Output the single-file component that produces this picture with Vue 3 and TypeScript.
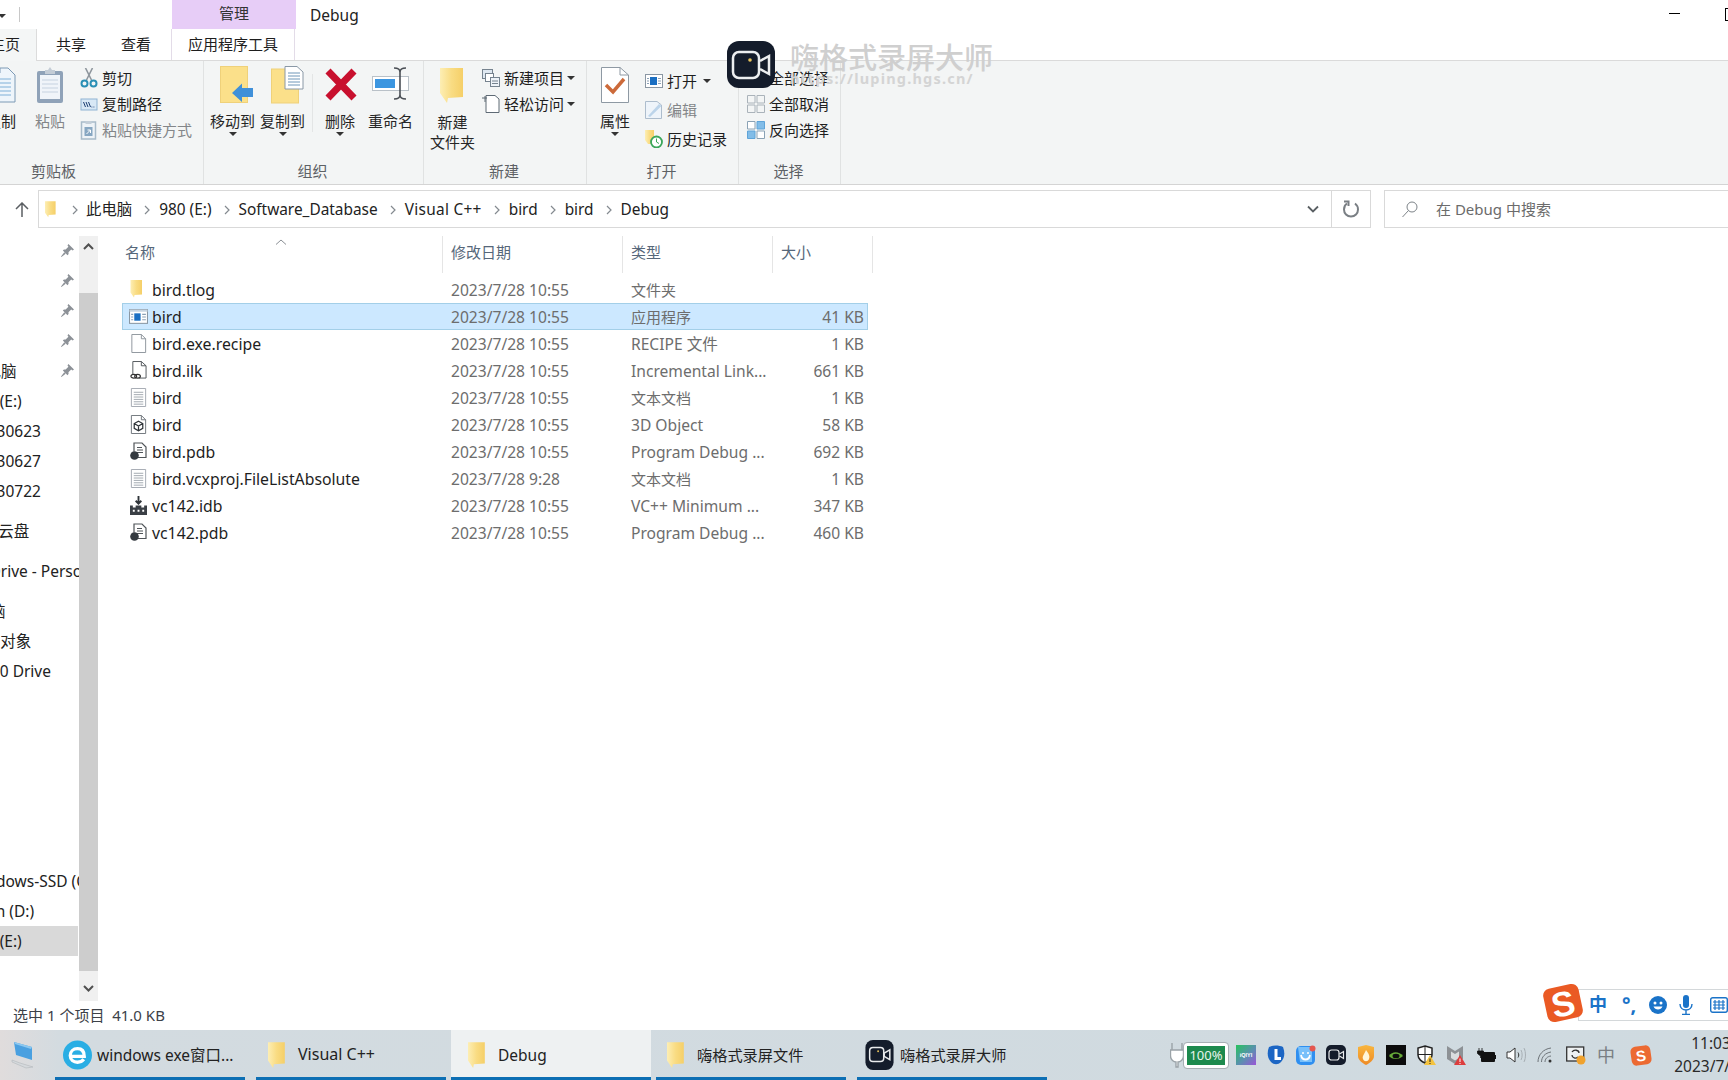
<script setup lang="ts">
interface FileRow { icon: string; name: string; date: string; type: string; size: string; cjk?: boolean; sel?: boolean }
const d = '2023/7/28 10:55'
const files: FileRow[] = [
  { icon: 'folder', name: 'bird.tlog', date: d, type: '文件夹', size: '', cjk: true },
  { icon: 'exe', name: 'bird', date: d, type: '应用程序', size: '41 KB', cjk: true, sel: true },
  { icon: 'blank', name: 'bird.exe.recipe', date: d, type: 'RECIPE 文件', size: '1 KB' },
  { icon: 'ilk', name: 'bird.ilk', date: d, type: 'Incremental Link...', size: '661 KB' },
  { icon: 'txt', name: 'bird', date: d, type: '文本文档', size: '1 KB', cjk: true },
  { icon: 'obj', name: 'bird', date: d, type: '3D Object', size: '58 KB' },
  { icon: 'pdb', name: 'bird.pdb', date: d, type: 'Program Debug ...', size: '692 KB' },
  { icon: 'txt', name: 'bird.vcxproj.FileListAbsolute', date: '2023/7/28 9:28', type: '文本文档', size: '1 KB', cjk: true },
  { icon: 'idb', name: 'vc142.idb', date: d, type: 'VC++ Minimum ...', size: '347 KB' },
  { icon: 'pdb', name: 'vc142.pdb', date: d, type: 'Program Debug ...', size: '460 KB' },
]
interface NavRow { text: string; x: number; pin?: boolean; gap?: number; sel?: boolean }
const nav: NavRow[] = [
  { text: '', x: 0, pin: true }, { text: '', x: 0, pin: true }, { text: '', x: 0, pin: true }, { text: '', x: 0, pin: true },
  { text: '此电脑', x: -30, pin: true },
  { text: '980 (E:)', x: -31 },
  { text: '20230623', x: -30 }, { text: '20230627', x: -30 }, { text: '20230722', x: -30 },
  { text: 'WPS云盘', x: -34, gap: 10 },
  { text: 'OneDrive - Personal', x: -41, gap: 10 },
  { text: '此电脑', x: -41, gap: 10 },
  { text: '3D 对象', x: -24 },
  { text: '360 Drive', x: -18 },
  { text: 'Windows-SSD (C:)', x: -32, gap: 180 },
  { text: 'Main (D:)', x: -31 },
  { text: '980 (E:)', x: -31, sel: true },
]
const crumbs = ['此电脑', '980 (E:)', 'Software_Database', 'Visual C++', 'bird', 'bird', 'Debug']
const tasks = [
  { icon: 'ie', text: 'windows exe窗口...', cls: 't1' },
  { icon: 'folder', text: 'Visual C++', cls: 't2' },
  { icon: 'folder', text: 'Debug', cls: 't3 active' },
  { icon: 'folder', text: '嗨格式录屏文件', cls: 't4' },
  { icon: 'rec', text: '嗨格式录屏大师', cls: 't5' },
]
const trayIcons = ['iq', 'lens', 'smile', 'cam', 'guard', 'nv', 'sec', 'mc', 'batt', 'vol', 'wifi', 'mon']
</script>

<template>
  <div class="root">
    <svg class="defs" aria-hidden="true">
      <defs>
        <linearGradient id="fg" x1="0" y1="0" x2="1" y2="0">
          <stop offset="0" stop-color="#fdeeb4" /><stop offset=".5" stop-color="#f9dc83" /><stop offset="1" stop-color="#f5cf68" />
        </linearGradient>
        <linearGradient id="iqg" x1="0" y1="0" x2="1" y2="1">
          <stop offset="0" stop-color="#27c35e" /><stop offset=".55" stop-color="#5b8fb0" /><stop offset="1" stop-color="#9a55d8" />
        </linearGradient>
        <linearGradient id="sh" x1="0" y1="0" x2="0" y2="1">
          <stop offset="0" stop-color="#f8b63e" /><stop offset="1" stop-color="#ee8a24" />
        </linearGradient>
      </defs>
      <symbol id="i-folder" viewBox="0 0 26 36"><path d="M0 0H23V29L8 30 7 35 0 25Z" fill="url(#fg)" /></symbol>
      <symbol id="i-exe" viewBox="0 0 18 14"><rect x=".5" y=".5" width="17" height="13" fill="#fff" stroke="#8a97a3" /><rect x=".5" y=".5" width="17" height="2" fill="#c9d6e2" /><rect x="5" y="4" width="6" height="7" fill="#1b6fc2" /><path d="M2 5h2M2 7.500h2M2 10h2M12.500 5h3.500M12.500 7.500h3.500M12.500 10h3.500" stroke="#8aa0b5" /></symbol>
      <symbol id="i-blank" viewBox="0 0 16 20"><path d="M1 .5H11L15.500 5V19.500H1Z" fill="#fff" stroke="#8c949b" /><path d="M11 .5V5H15.500" fill="none" stroke="#8c949b" /></symbol>
      <symbol id="i-ilk" viewBox="0 0 18 20"><path d="M3 14V.500H12L17 5V18H9" fill="#fff" stroke="#4f5458" /><path d="M12 .5V5H17" fill="none" stroke="#4f5458" /><ellipse cx="4" cy="16" rx="3" ry="2" fill="none" stroke="#333" stroke-width="1.300" /><ellipse cx="8" cy="16" rx="3" ry="2" fill="none" stroke="#333" stroke-width="1.300" /></symbol>
      <symbol id="i-txt" viewBox="0 0 16 20"><path d="M.5.5H15.500V19.500H.5Z" fill="#fff" stroke="#a2a8b0" /><path d="M3 4.500H13M3 7H13M3 9.500H13M3 12H13M3 14.500H13M3 17H13" stroke="#a0a6ae" /></symbol>
      <symbol id="i-obj" viewBox="0 0 16 20"><path d="M.5.5H11L15.500 5V19.500H.5Z" fill="#fff" stroke="#6d7379" /><path d="M11 .5V5H15.500" fill="none" stroke="#6d7379" /><path d="M8 6.500L12.500 9V14L8 16.500 3.500 14V9ZM3.500 9L8 11.500 12.500 9M8 11.500V16.500" fill="none" stroke="#2e3338" stroke-width="1.300" /></symbol>
      <symbol id="i-pdb" viewBox="0 0 17 18"><path d="M4 9V.500H12L16 4.500V15H8" fill="#fff" stroke="#4f5458" stroke-width="1.200" /><path d="M7 5h5M7 7.500h6M7 10h6" stroke="#4f5458" /><circle cx="4.500" cy="13" r="4.300" fill="#343a40" /></symbol>
      <symbol id="i-idb" viewBox="0 0 18 20"><path d="M0 10H3V12H6V10H12V12H15V10H18V20H0Z" fill="#3a3f45" /><path d="M9 0V8M6 5L9 8 12 5" fill="none" stroke="#2f3439" stroke-width="2" /><path d="M3 15.500H5M8 15.500H10M13 15.500H15" stroke="#fff" stroke-width="2" /></symbol>

      <symbol id="i-plug" viewBox="0 0 14 26"><path d="M2 1V8M12 1V8M0.500 8H13.500V14C13.500 18 10 20 8 20V25H6V20C4 20 .5 18 .5 14Z" fill="#fff" stroke="#9ba3a8" stroke-width="1.400" /></symbol>
      <symbol id="i-ie" viewBox="0 0 30 30"><circle cx="15" cy="15" r="15" fill="#2aaee4" /><path d="M7.500 16.500H22C22 11 19 8.500 15 8.500 10.500 8.500 7.500 11.500 7.500 15.500 7.500 20 11 22.500 15 22.500 18 22.500 20 21.500 21.500 19.500" fill="none" stroke="#fff" stroke-width="3.400" /></symbol>
      <symbol id="i-rec" viewBox="0 0 30 32"><rect width="30" height="32" rx="8" fill="#141c2b" /><rect x="4.500" y="8" width="15" height="15" rx="3.500" fill="none" stroke="#e8eaec" stroke-width="1.600" /><path d="M20 14L26 10.500V21L20 17.500Z" fill="none" stroke="#e8eaec" stroke-width="1.600" /><circle cx="13.500" cy="12" r="1" fill="#e8c35a" /></symbol>
      <symbol id="i-iq" viewBox="0 0 20 20"><rect width="20" height="20" fill="url(#iqg)" /><text x="10" y="12" text-anchor="middle" font-size="5.500" font-family="Liberation Sans" font-weight="700" fill="#fff">iQIYI</text></symbol>
      <symbol id="i-lens" viewBox="0 0 20 20"><path d="M3 2C7 0 13 0 17 2 19 7 19 13 15 17 12 20 8 20 5 17 1 13 1 7 3 2Z" fill="#1c66c4" /><path d="M8.500 4H11.500V12H15V15H8.500Z" fill="#fff" /></symbol>
      <symbol id="i-smile" viewBox="0 0 20 20"><rect y="1" width="19" height="19" rx="5" fill="#2f8ff0" /><path d="M2 2H16V17H4Z" fill="#78c0fa" /><path d="M5 10C6 16 13 16 14 10" fill="none" stroke="#fff" stroke-width="1.800" /><circle cx="7" cy="8" r="1" fill="#fff" /><circle cx="12" cy="8" r="1" fill="#fff" /><circle cx="16.500" cy="3.500" r="3" fill="#e5574f" /></symbol>
      <symbol id="i-cam" viewBox="0 0 20 20"><rect width="20" height="20" rx="5" fill="#141c2b" /><rect x="3" y="5" width="10" height="10" rx="2.500" fill="none" stroke="#e8eaec" stroke-width="1.200" /><path d="M13.500 9L17.500 6.500V13.500L13.500 11" fill="none" stroke="#e8eaec" stroke-width="1.200" /></symbol>
      <symbol id="i-guard" viewBox="0 0 18 20"><path d="M1 2L9 0 17 2V11C17 15 13 18 9 20 5 18 1 15 1 11Z" fill="url(#sh)" /><path d="M9 5C12 9 13 11 12 14 11 17 7 17 6 14 5 11 7 10 9 5Z" fill="#fff5d8" /></symbol>
      <symbol id="i-nv" viewBox="0 0 20 20"><rect width="20" height="20" fill="#0c0c0c" /><path d="M3 11C6 6 13 6 17 11 13 15 6 15 3 11Z" fill="#66a838" /><ellipse cx="10" cy="11" rx="3.500" ry="2.300" fill="#0c0c0c" /></symbol>
      <symbol id="i-sec" viewBox="0 0 20 20"><path d="M9 1L16 3V10C16 14 12 17 9 18 6 17 2 14 2 10V3Z" fill="#fff" stroke="#222" stroke-width="1.500" /><path d="M9 1V18M2 9.500H16" stroke="#222" stroke-width="1" /><path d="M14 10L20 20H8Z" fill="#f4c33e" /><path d="M14 13.500V17M14 18V19" stroke="#222" /></symbol>
      <symbol id="i-mc" viewBox="0 0 20 20"><path d="M1 1L9 6 17 1V14L9 19 1 14Z" fill="#8d9195" /><path d="M5 6.500L9 9 13 6.500V13L9 15.500 5 13Z" fill="#d9dcde" /><path d="M14 10L20 20H8Z" fill="#dc3d3d" /><path d="M14 13.500V17M14 18V19" stroke="#fff" /></symbol>
      <symbol id="i-batt" viewBox="0 0 20 20"><path d="M3 3V6M6 3V6M1.500 6H7.500V8.500L5 10.500H4L1.500 8.500ZM4.500 10.500V13" fill="#111" stroke="#111" stroke-width=".8" /><rect x="5" y="7" width="14" height="10" rx="1" fill="#111" /><rect x="19" y="10" width="1" height="4" fill="#111" /></symbol>
      <symbol id="i-vol" viewBox="0 0 20 20"><path d="M1 7H4L9 3V17L4 13H1Z" fill="#fff" stroke="#333" /><path d="M12 7.500C13 9 13 11 12 12.500" fill="none" stroke="#333" /><path d="M15 5C16.500 8 16.500 12 15 15" fill="none" stroke="#a8b0b5" /><path d="M18 3C20 7 20 13 18 17" fill="none" stroke="#a8b0b5" /></symbol>
      <symbol id="i-wifi" viewBox="0 0 20 20"><path d="M2 17C2 10 7 4 15 3" fill="none" stroke="#6d7378" /><path d="M5.500 17C5.500 12 9 8 15 7" fill="none" stroke="#6d7378" /><path d="M9 17C9 14 11 11.500 15 11" fill="none" stroke="#6d7378" /><circle cx="14" cy="16" r="1.500" fill="#333" /></symbol>
      <symbol id="i-mon" viewBox="0 0 20 20"><rect x=".7" y="2" width="17" height="14" fill="#eef1f2" stroke="#333" stroke-width="1.300" /><path d="M6 7C8 4 13 5 13 8M12 12C10 14 6 13 6 10" fill="none" stroke="#333" stroke-width="1.300" /><circle cx="15" cy="15" r="4.500" fill="#f0a22e" /></symbol>
      <symbol id="i-pin" viewBox="0 0 14 14"><path d="M8 0L14 6 12.500 7 11 6 8 9C8.500 10.500 8 11.500 7 12L2 7C2.500 6 3.500 5.500 5 6L8 3 7 1.500ZM3.500 9L5 10.500 .5 14 0 13.500Z" fill="#8c9197" /></symbol>
    </svg>

    <header class="titlebar">
      <span class="qa-caret"></span>
      <span class="qa-sep"></span>
      <div class="ctx-tab">管理</div>
      <span class="title">Debug</span>
      <span class="win-min"></span>
      <span class="win-max"></span>
    </header>

    <nav class="tabs">
      <div class="tab home"><span class="home-text">主页</span></div>
      <div class="tab share">共享</div>
      <div class="tab view">查看</div>
      <div class="tab tool">应用程序工具</div>
    </nav>

    <section class="ribbon">
      <div class="group g1">
        <div class="group-body">
          <div class="big copy">
            <svg class="big-ic" width="32" height="36" viewBox="0 0 32 36"><path d="M5 6H16V1H24L31 8V35H5Z" fill="#eef5fb" stroke="#7d9ab5" /><path d="M10 12H27M10 16H27M10 20H27M10 24H27M10 28H27" stroke="#7fb0d8" /></svg>
            <span class="cut-label">复制</span>
          </div>
          <div class="big paste muted">
            <svg class="big-ic" width="28" height="36" viewBox="0 0 28 36"><rect x="1" y="4" width="26" height="32" rx="2" fill="#8fa2b8" /><rect x="4" y="8" width="20" height="24" fill="#f0f4f9" /><path d="M6 13H22M6 17H22M6 21H22M6 25H22" stroke="#c6d2e0" /><path d="M9 7V3H12L14 0 16 3H19V7Z" fill="#c3ccd6" /></svg>
            <span>粘贴</span>
          </div>
          <div class="small-col tight">
            <div class="small"><svg width="17" height="20" viewBox="0 0 17 20"><path d="M12 0L6 12M5 0L11 12" stroke="#8f979e" stroke-width="1.600" /><circle cx="4" cy="15.500" r="3" fill="none" stroke="#2a8fb5" stroke-width="2" /><circle cx="13" cy="15.500" r="3" fill="none" stroke="#2a8fb5" stroke-width="2" /></svg><span>剪切</span></div>
            <div class="small"><svg width="17" height="14" viewBox="0 0 17 14"><rect x=".5" y="2" width="16" height="11" fill="#d8e8f6" stroke="#8fb3d3" /><path d="M3 5L5 10M5.500 5L7.500 10M8 5L10 10M11 10H11.800M13 10H13.800" stroke="#1d3f73" stroke-width="1" /></svg><span>复制路径</span></div>
            <div class="small muted"><svg width="17" height="20" viewBox="0 0 17 20"><rect x="1" y="2" width="14" height="17" fill="#eef3f7" stroke="#a8bbc9" stroke-width="1.500" /><path d="M5 1H11V4H5Z" fill="#c3ced8" /><rect x="4" y="7" width="8" height="9" fill="#87a7c2" /><path d="M6 14L10 10M7 10H10V13" stroke="#fff" fill="none" /></svg><span>粘贴快捷方式</span></div>
          </div>
        </div>
        <div class="group-label lab1">剪贴板</div>
      </div>

      <div class="group g2">
        <div class="group-body">
          <div class="big w45">
            <svg class="big-ic shift4" width="34" height="38" viewBox="0 0 34 38"><rect x=".5" y=".5" width="27" height="36" fill="#fbe08a" stroke="#efd17a" /><path d="M12 27L22 17.500V22H33V31H22V36Z" fill="#3f90d9" /></svg>
            <span>移动到</span><i class="caret"></i>
          </div>
          <div class="big w45">
            <svg class="big-ic shift4" width="34" height="38" viewBox="0 0 34 38"><rect x="1.500" y="3" width="27" height="34" fill="#fbe08a" stroke="#efd17a" /><path d="M15 .5H27L33 6V23H15Z" fill="#fff" stroke="#8a98a6" /><path d="M18 7H30M18 10H30M18 13H30M18 16H30M18 19H30" stroke="#6f96b8" /></svg>
            <span>复制到</span><i class="caret"></i>
          </div>
          <span class="dash"></span>
          <div class="big w30">
            <svg class="big-ic shift1" width="32" height="36" viewBox="0 0 32 36"><path d="M3 4L29 31M29 4L3 31" stroke="#c8102e" stroke-width="7" /></svg>
            <span>删除</span><i class="caret"></i>
          </div>
          <div class="big w45 ml13">
            <svg class="big-ic" width="38" height="36" viewBox="0 0 38 36"><rect x=".5" y="9.500" width="36" height="14" fill="#fff" stroke="#b9c1c8" /><rect x="3" y="12" width="20" height="9" fill="#3c96e0" /><path d="M22 1C26 1 28 3 28 5V28C28 30 30 32 34 32M34 1C30 1 28 3 28 5M28 28C28 30 26 32 22 32" fill="none" stroke="#4a4f55" stroke-width="1.600" /></svg>
            <span>重命名</span>
          </div>
        </div>
        <div class="group-label">组织</div>
      </div>

      <div class="group g3">
        <div class="group-body">
          <div class="big w45 folder-big">
            <svg class="big-ic" width="26" height="36"><use href="#i-folder" /></svg>
            <span>新建</span><span>文件夹</span>
          </div>
          <div class="small-col tight ml2">
            <div class="small"><svg width="18" height="18" viewBox="0 0 18 18"><rect x=".5" y=".5" width="10" height="9" fill="#dfe8f1" stroke="#76838f" /><rect x="3.500" y="4.500" width="8" height="8" fill="#fff" stroke="#76838f" /><rect x="8.500" y="8.500" width="9" height="9" fill="#eef3f8" stroke="#76838f" /><path d="M10 12H16M10 14.500H16" stroke="#76838f" /></svg><span>新建项目</span><i class="caret inl"></i></div>
            <div class="small"><svg width="18" height="18" viewBox="0 0 18 18"><path d="M4 .5H13L17 4V17.500H4Z" fill="#fff" stroke="#5e6a75" /><path d="M0 3H5M3 1V7" stroke="#5e6a75" /></svg><span>轻松访问</span><i class="caret inl"></i></div>
          </div>
        </div>
        <div class="group-label">新建</div>
      </div>

      <div class="group g4">
        <div class="group-body">
          <div class="big w30 prop">
            <svg class="big-ic" width="28" height="36" viewBox="0 0 28 36"><path d="M.5.5H19L27.500 8V35.500H.5Z" fill="#fff" stroke="#8e99a3" /><path d="M19 .5V8H27.500" fill="none" stroke="#8e99a3" /><path d="M5 18L12 25 23 12" fill="none" stroke="#cc6a3a" stroke-width="3.500" /></svg>
            <span>属性</span><i class="caret"></i>
          </div>
          <div class="small-col loose ml15">
            <div class="small"><svg width="18" height="14" viewBox="0 0 18 14"><rect x=".5" y=".5" width="17" height="13" fill="#fff" stroke="#8a97a3" /><rect x="5" y="3" width="7" height="8" fill="#1b6fc2" /><path d="M2 4.500h2M2 7h2M2 9.500h2M13 4.500h3M13 7h3M13 9.500h3" stroke="#8aa0b5" /></svg><span>打开</span><i class="caret inl2"></i></div>
            <div class="small muted"><svg width="18" height="18" viewBox="0 0 18 18"><path d="M.5.5H12L16.500 4V17.500H.5Z" fill="#eef4fa" stroke="#adbdcd" /><path d="M3 15L14 3 16.500 5 5 16Z" fill="#bcd4ea" /></svg><span>编辑</span></div>
            <div class="small"><svg width="18" height="18" viewBox="0 0 18 18"><path d="M0 0H9V14H3L0 10Z" fill="url(#fg)" /><circle cx="11.500" cy="12" r="5.500" fill="#fff" stroke="#3aa65a" stroke-width="1.800" /><path d="M11.500 8.500V12L14 13.500" fill="none" stroke="#3aa65a" /></svg><span>历史记录</span></div>
          </div>
        </div>
        <div class="group-label">打开</div>
      </div>

      <div class="group g5">
        <div class="group-body">
          <div class="small-col tight">
            <div class="small"><svg width="18" height="18" viewBox="0 0 18 18"><path d="M.5.5H8V8H.5ZM10 .5H17.500V8H10ZM.5 10H8V17.500H.5ZM10 10H17.500V17.500H10Z" fill="#7fb5de" stroke="#7fb5de" /></svg><span>全部选择</span></div>
            <div class="small"><svg width="18" height="18" viewBox="0 0 18 18"><path d="M.5.5H8V8H.5ZM10 .5H17.500V8H10ZM.5 10H8V17.500H.5ZM10 10H17.500V17.500H10Z" fill="none" stroke="#aab3ba" /></svg><span>全部取消</span></div>
            <div class="small"><svg width="18" height="18" viewBox="0 0 18 18"><path d="M.5.5H8V8H.5ZM10 10H17.500V17.500H10Z" fill="#fff" stroke="#8aa2b5" /><path d="M10 .5H17.500V8H10ZM.5 10H8V17.500H.5Z" fill="#82bde8" stroke="#5fa4d8" /></svg><span>反向选择</span></div>
          </div>
        </div>
        <div class="group-label">选择</div>
      </div>
    </section>

    <div class="addr-row">
      <svg class="up" width="14" height="16" viewBox="0 0 14 16"><path d="M7 15V1M1 7L7 1 13 7" fill="none" stroke="#5b5f63" stroke-width="1.500" /></svg>
      <div class="addr">
        <svg class="addr-folder" width="12" height="17"><use href="#i-folder" /></svg>
        <div class="crumbs">
          <template v-for="(c, i) in crumbs" :key="i">
            <svg class="chev" width="6" height="10" viewBox="0 0 6 10"><path d="M1 1L5 5 1 9" fill="none" stroke="#848a90" stroke-width="1.200" /></svg>
            <span class="crumb" :class="{ wide: c === 'Visual C++' }">{{ c }}</span>
          </template>
        </div>
        <svg class="addr-down" width="12" height="8" viewBox="0 0 12 8"><path d="M1 1.500L6 6.500 11 1.500" fill="none" stroke="#5a5f63" stroke-width="1.800" /></svg>
        <div class="refresh"><svg width="16" height="18" viewBox="0 0 16 18"><path d="M4 3.500C1.500 5 1 7 1 9.500 1 13.500 4 16.500 8 16.500 12 16.500 15 13.500 15 9.500 15 7 14 5 12 3.500" fill="none" stroke="#7a7f84" stroke-width="2" /><path d="M1 1.500H5.500V6" fill="none" stroke="#7a7f84" stroke-width="2" /></svg></div>
      </div>
      <div class="search">
        <svg width="16" height="17" viewBox="0 0 16 17"><circle cx="10" cy="6" r="5" fill="none" stroke="#7d8388" /><path d="M6.500 9.500L.5 16" stroke="#7d8388" /></svg>
        <span>在 Debug 中搜索</span>
      </div>
    </div>

    <main class="body">
      <aside class="sidebar">
        <div v-for="(n, i) in nav" :key="i" class="nav-row" :class="{ sel: n.sel, g10: n.gap === 10, g180: n.gap === 180 }">
          <span class="nav-text" :style="{ marginLeft: n.x + 'px' }">{{ n.text }}</span>
          <svg v-if="n.pin" class="pin" width="13" height="13"><use href="#i-pin" /></svg>
        </div>
      </aside>
      <div class="scroll">
        <div class="sc-btn"><svg width="11" height="7" viewBox="0 0 11 7"><path d="M1 6L5.500 1.500 10 6" fill="none" stroke="#505050" stroke-width="2" /></svg></div>
        <div class="sc-gap"></div>
        <div class="sc-thumb"></div>
        <div class="sc-btn low"><svg width="11" height="7" viewBox="0 0 11 7"><path d="M1 1L5.500 5.500 10 1" fill="none" stroke="#505050" stroke-width="2" /></svg></div>
      </div>
      <div class="list">
        <div class="head">
          <div class="hc h1">名称<svg class="sort" width="12" height="6" viewBox="0 0 12 6"><path d="M1 5.500L6 1 11 5.500" fill="none" stroke="#8a8f94" /></svg></div>
          <div class="hc h2">修改日期</div>
          <div class="hc h3">类型</div>
          <div class="hc h4">大小</div>
        </div>
        <div class="rows">
          <div v-for="(f, i) in files" :key="i" class="row" :class="{ sel: f.sel }">
            <div class="name">
              <span class="ic"><svg :class="'fi fi-' + f.icon"><use :href="'#i-' + (f.icon)" /></svg></span>
              <span class="nm">{{ f.name }}</span>
            </div>
            <div class="date">{{ f.date }}</div>
            <div class="type" :class="{ cjk: f.cjk }">{{ f.type }}</div>
            <div class="size">{{ f.size }}</div>
          </div>
        </div>
      </div>
    </main>

    <div class="status">选中 1 个项目&nbsp;&nbsp;41.0 KB</div>

    <footer class="taskbar">
      <div class="desk">
        <svg width="24" height="28" viewBox="0 0 24 28"><path d="M3 1L21 6V19L5 14Z" fill="#4aa0e0" /><path d="M3 1L21 6 20 8 4 3Z" fill="#8cc8f0" /><path d="M1 19L9 22 22 26 15 27 1 21Z" fill="#d5d9dc" stroke="#aab0b5" stroke-width=".5" /></svg>
      </div>
      <div v-for="t in tasks" :key="t.cls" class="task" :class="t.cls">
        <svg :class="t.icon === 'folder' ? 'tk-folder' : 'tk-app'"><use :href="'#i-' + t.icon" /></svg>
        <span>{{ t.text }}</span>
      </div>
      <div class="tray">
        <svg class="plug" width="14" height="26"><use href="#i-plug" /></svg>
        <div class="charge"><div class="charge-in">100%</div></div>
        <svg v-for="t in trayIcons" :key="t" class="tic" width="20" height="20"><use :href="'#i-' + t" /></svg>
        <span class="tray-zh">中</span>
        <span class="tray-s"><b>S</b></span>
        <div class="clock"><span>11:03</span><span>2023/7/28</span></div>
      </div>
    </footer>

    <div class="ime">
      <span class="ime-s"><b>S</b></span>
      <div class="ime-bar">
        <span class="ime-zh">中</span>
        <span class="ime-p">°,</span>
        <svg width="18" height="18" viewBox="0 0 18 18"><circle cx="9" cy="9" r="9" fill="#1a73c8" /><circle cx="6" cy="7" r="1.500" fill="#fff" /><circle cx="12" cy="7" r="1.500" fill="#fff" /><path d="M4.500 10.500C6 14.500 12 14.500 13.500 10.500Z" fill="#fff" /></svg>
        <svg width="14" height="20" viewBox="0 0 14 20"><rect x="4" y="0" width="6" height="13" rx="3" fill="#1a73c8" /><path d="M1 9C1 17 13 17 13 9M7 15V19M3 19.500H11" fill="none" stroke="#1a73c8" stroke-width="1.400" /></svg>
        <svg class="ime-kb" width="18" height="16" viewBox="0 0 18 16"><rect x=".7" y=".7" width="16.600" height="14.600" rx="2" fill="#fff" stroke="#1a73c8" stroke-width="1.400" /><path d="M3 5H15M3 8H15M3 11H15M5 3V13M9 3V13M13 3V13" stroke="#1a73c8" stroke-width="1.200" /></svg>
      </div>
    </div>

    <div class="wm">
      <div class="wm-logo"><svg width="48" height="48" viewBox="0 0 48 48"><rect x="6" y="11" width="26" height="26" rx="6" fill="none" stroke="#eceef0" stroke-width="2.500" /><path d="M33 20L42 15V33L33 28" fill="none" stroke="#eceef0" stroke-width="2.500" /><circle cx="23" cy="19" r="1.800" fill="#e8c35a" /></svg></div>
      <div class="wm-text"><div class="wm-title">嗨格式录屏大师</div><div class="wm-url">https://luping.hgs.cn/</div></div>
    </div>
  </div>
</template>

<style>
html, body { margin: 0; background: #fff; overflow: hidden; }
</style>

<style scoped>
.root { width: 1728px; height: 1080px; overflow: hidden; display: flex; flex-direction: column; position: relative; background: #fff; color: #1e1e1e; font: 15px/1.2 "Noto Sans", "Noto Sans CJK SC", sans-serif; }
.defs { width: 0; height: 0; overflow: hidden; display: block; flex: none; }
svg { flex: none; display: block; }

.titlebar { height: 29px; display: flex; align-items: center; flex: none; position: relative; }
.qa-caret { width: 0; height: 0; border: 4px solid transparent; border-top-color: #333; border-bottom: 0; margin: 2px 0 0 -2px; }
.qa-sep { width: 1px; height: 15px; background: #c8c8c8; margin: 0 0 0 13px; }
.ctx-tab { width: 124px; height: 29px; margin-left: 152px; background: #e7cdf7; text-align: center; line-height: 27px; color: #333; }
.title { margin-left: 14px; font-size: 15.500px; color: #222; padding-top: 2px; }
.win-min { width: 11px; height: 1px; background: #000; position: absolute; left: 1669px; top: 13px; }
.win-max { width: 11px; height: 11px; border: 1px solid #000; position: absolute; left: 1725px; top: 8px; }

.tabs { height: 31px; display: flex; flex: none; background: #fff; }
.tab { height: 31px; line-height: 30px; }
.home { width: 37px; background: #f4f6f6; border-right: 1px solid #dcdcdc; overflow: hidden; position: relative; box-sizing: border-box; height: 32px; z-index: 1; }
.home-text { display: block; margin-left: -10px; white-space: nowrap; }
.share { margin-left: 19px; width: 30px; }
.view { margin-left: 35px; width: 30px; }
.tool { margin-left: 20px; width: 124px; text-align: center; border: solid #e3dce8; border-width: 0 1px; box-sizing: border-box; }

.ribbon { height: 125px; flex: none; display: flex; background: #f3f5f5; border-top: 1px solid #dadada; border-bottom: 1px solid #d4d4d4; box-sizing: border-box; }
.group { display: flex; flex-direction: column; border-right: 1px solid #e0e2e2; box-sizing: border-box; flex: none; }
.g1 { width: 204px; }
.g2 { width: 220px; }
.g3 { width: 163px; }
.g4 { width: 152px; }
.g5 { width: 102px; }
.group-body { flex: 1; display: flex; align-items: flex-start; padding-top: 5px; min-height: 0; }
.group-label { height: 24px; line-height: 22px; text-align: center; color: #5d6165; flex: none; padding-right: 2px; }
.lab1 { text-align: left; padding-left: 31px; padding-right: 0; }

.big { display: flex; flex-direction: column; align-items: center; flex: none; line-height: 20px; color: #262626; }
.big-ic { height: 38px; margin-bottom: 7px; }
.shift4 { transform: translateX(4px); }
.shift1 { transform: translateX(1px); }
.copy { width: 16px; overflow: hidden; align-items: flex-end; }
.cut-label { white-space: nowrap; display: block; }
.paste { width: 30px; margin-left: 19px; }
.muted, .muted span { color: #838689; }
.g1 .small-col { margin-left: 15px; }
.g2 .group-body { padding-left: 6px; }
.w45 { width: 45px; margin-right: 5px; }
.w30 { width: 30px; }
.ml13 { margin-left: 13px; }
.caret { display: block; width: 0; height: 0; border: 4px solid transparent; border-top-color: #333; border-bottom: 0; margin-top: 1px; }
.caret.inl { margin: 0 0 0 -1px; }
.caret.inl2 { margin: 0 0 0 2px; }
.dash { width: 1px; height: 58px; margin: 8px 12px 0 2px; background: #e3e5e5; }
.g3 .group-body { padding-left: 6px; }
.folder-big { padding-top: 1px; }
.ml2 { margin-left: 2px; }
.g4 .group-body { padding-left: 13px; }
.prop { margin-right: 0; }
.ml15 { margin-left: 15px; }
.g5 .group-body { padding-left: 8px; }
.small-col { display: flex; flex-direction: column; }
.small { display: flex; align-items: center; height: 26px; gap: 4px; white-space: nowrap; }
.small svg { width: 18px; }
.tight { margin-top: -1px; }
.loose { margin-top: 0; }
.loose .small { height: 29px; }

.addr-row { height: 50px; flex: none; display: flex; align-items: flex-start; padding-top: 5px; box-sizing: border-box; position: relative; }
.up { margin: 12px 9px 0 15px; }
.addr { width: 1333px; height: 38px; box-sizing: border-box; border: 1px solid #d9d9d9; display: flex; align-items: center; }
.addr-folder { margin-left: 6px; }
.crumbs { display: flex; align-items: center; margin-left: 15px; flex: 1; padding-top: 2px; }
.chev { margin: 0 8px 0 0; }
.crumb + .chev { margin-left: 12px; margin-right: 9px; }
.crumb { font-size: 15.400px; white-space: nowrap; color: #222; }
.crumb.wide { letter-spacing: .300px; }
.addr-down { margin-right: 12px; }
.refresh { width: 38px; height: 36px; border-left: 1px solid #d9d9d9; display: flex; align-items: center; justify-content: center; }
.search { margin-left: 13px; flex: 1; height: 38px; box-sizing: border-box; border: 1px solid #d9d9d9; border-right: 0; display: flex; align-items: center; gap: 18px; padding-left: 17px; color: #6b6b6b; }

.body { flex: 1; display: flex; min-height: 0; }
.sidebar { width: 79px; overflow: hidden; flex: none; padding-top: 1px; }
.nav-row { height: 30px; display: flex; align-items: center; position: relative; white-space: nowrap; overflow: hidden; font-size: 15.500px; color: #222; }
.nav-row.sel { background: #d9d9d9; margin-right: 1px; }
.g10 { margin-top: 10px; }
.g180 { margin-top: 180px; }
.pin { position: absolute; left: 61px; top: 8px; }
.nav-text { flex: none; }
.scroll { width: 19px; flex: none; display: flex; flex-direction: column; background: #f0f0f0; margin-top: 1px; }
.sc-btn { height: 21px; display: flex; align-items: center; justify-content: center; flex: none; }
.sc-gap { height: 36px; flex: none; }
.sc-thumb { flex: 1; background: #cdcdcd; }
.sc-btn.low { height: 30px; padding-top: 4px; box-sizing: border-box; }
.list { margin-left: 24px; width: 760px; flex: none; }
.head { display: grid; grid-template-columns: 321px 180px 150px 100px; height: 37px; margin-top: 1px; }
.hc { border-right: 1px solid #e5e5e5; line-height: 32px; color: #56677a; padding-left: 8px; box-sizing: border-box; position: relative; }
.h1 { padding-left: 3px; }
.sort { position: absolute; left: 153px; top: 3px; }
.rows { padding-top: 3px; }
.row { display: grid; grid-template-columns: 329px 180px 150px 83px; width: 746px; height: 27px; align-items: center; font-size: 15.600px; color: #6d6d6d; box-sizing: border-box; }
.row.sel { background: #cce8ff; box-shadow: inset 0 0 0 1px #a3cfe8; }
.name { display: flex; align-items: center; padding-left: 8px; color: #1e1e1e; white-space: nowrap; font-size: 15.800px; }
.nm, .date, .type, .size { padding-top: 2px; }
.ic { width: 22px; height: 20px; display: flex; align-items: center; flex: none; }
.fi { width: 17px; height: 19px; }
.fi-folder { width: 14px; height: 18px; }
.fi-exe { width: 19px; height: 15px; margin-left: -1px; }
.date { white-space: nowrap; }
.type { white-space: nowrap; }
.type.cjk { font-size: 15px; padding-top: 0; }
.size { text-align: right; white-space: nowrap; }

.status { height: 29px; flex: none; line-height: 29px; padding-left: 13px; color: #3c4148; font-size: 15px; }

.taskbar { height: 50px; flex: none; display: flex; background: linear-gradient(90deg, #e0dcdc 0, #d3dbe0 60px, #cfdae0 100%); position: relative; }
.desk { width: 55px; flex: none; display: flex; align-items: center; justify-content: center; padding-right: 10px; box-sizing: border-box; }
.task { width: 190px; flex: none; display: flex; align-items: center; border-bottom: 3px solid #0d6fb4; box-sizing: border-box; white-space: nowrap; color: #222; padding-top: 3px; }
.t1 { margin-right: 11px; padding-left: 8px; gap: 5px; font-size: 15.500px; }
.t2 { margin-right: 5px; padding-left: 12px; gap: 11px; font-size: 16px; }
.t3 { width: 200px; margin-right: 5px; padding-left: 17px; gap: 11px; background: #eef1f2; font-size: 15.500px; }
.t4 { margin-right: 11px; padding-left: 11px; gap: 11px; font-size: 15.200px; }
.t5 { padding-left: 8px; gap: 6px; font-size: 15.200px; }
.tk-folder { width: 19px; height: 27px; }
.tk-app { width: 29px; height: 30px; }
.tray { flex: none; margin-left: 123px; display: flex; align-items: center; gap: 10px; position: relative; }
.plug { margin-right: -9px; }
.charge { width: 44px; height: 25px; box-sizing: border-box; border: 2px solid #fff; outline: 1px solid #a8b0b5; border-radius: 3px; background: #fff; padding: 1px; margin-right: -2px; margin-left: -1px; }
.charge-in { height: 100%; background: #1d8a4e; color: #e8f4ec; font-size: 13px; line-height: 19px; text-align: center; }
.tray-zh { width: 20px; text-align: center; color: #7a7f84; font-size: 18px; line-height: 20px; }
.tray-s { width: 20px; height: 19px; border-radius: 5px; background: #ec6a32; display: flex; align-items: center; justify-content: center; color: #fff; font: 900 15px/1 "Liberation Sans", sans-serif; transform: rotate(-8deg); margin-left: 5px; }
.clock { display: flex; flex-direction: column; align-items: center; margin-left: 13px; width: 74px; color: #2a2a2a; font-size: 15.500px; line-height: 23px; white-space: nowrap; }

.ime { position: absolute; left: 1545px; top: 985px; display: flex; align-items: center; }
.ime-s { width: 36px; height: 34px; border-radius: 7px; background: #ea5a24; transform: rotate(-12deg); display: flex; align-items: center; justify-content: center; color: #fff; font: 900 35px/1 "Liberation Sans", sans-serif; position: relative; z-index: 1; }
.ime-bar { margin-left: -3px; margin-top: 4px; width: 160px; height: 32px; box-sizing: border-box; background: #fff; border: 1px solid #d4d8da; display: flex; align-items: center; gap: 12px; padding-left: 10px; color: #1a73c8; }
.ime-zh { font-size: 18px; font-weight: 700; }
.ime-p { font-size: 20px; font-weight: 700; line-height: 16px; margin-left: 3px; margin-right: 1px; }
.ime-kb { margin-left: 5px; }

.wm { position: absolute; left: 727px; top: 41px; display: flex; pointer-events: none; }
.wm-logo { width: 48px; height: 47px; border-radius: 12px; background: #141c2b; display: flex; align-items: center; justify-content: center; }
.wm-text { margin-left: 15px; color: #dcdcdc; }
.wm-title { font-size: 29px; line-height: 33px; white-space: nowrap; color: #cfcfcf; font-weight: 500; }
.wm-url { font-size: 14.500px; line-height: 18px; letter-spacing: 1.200px; white-space: nowrap; font-weight: 700; color: #d4d4d4; margin-top: -5px; }
</style>
